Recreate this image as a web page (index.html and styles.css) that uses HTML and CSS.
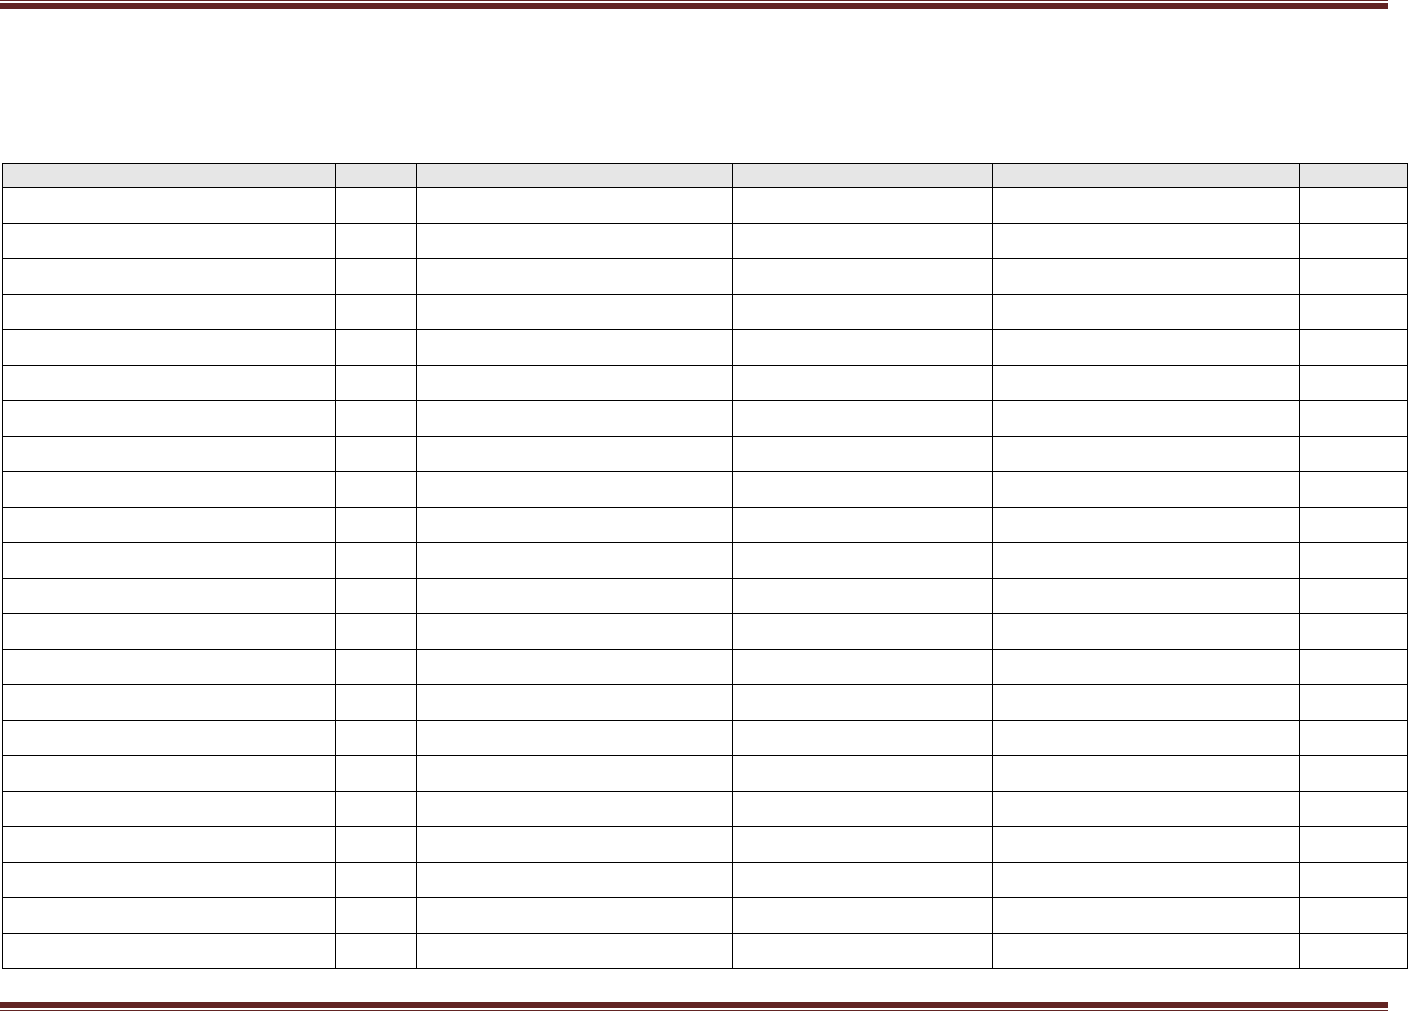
FILE: index.html
```html
<!DOCTYPE html>
<html lang="en">
<head>
<meta charset="utf-8">
<title>Table</title>
<link rel="stylesheet" href="styles.css">
</head>
<body>
<div class="page">
  <header class="rule rule-top">
    <div class="thin"></div>
    <div class="thick"></div>
  </header>
  <main class="content">
    <table class="grid">
      <colgroup>
        <col class="c1"><col class="c2"><col class="c3"><col class="c4"><col class="c5"><col class="c6">
      </colgroup>
      <thead>
        <tr class="head"><th></th><th></th><th></th><th></th><th></th><th></th></tr>
      </thead>
      <tbody>
        <tr><td></td><td></td><td></td><td></td><td></td><td></td></tr>
        <tr><td></td><td></td><td></td><td></td><td></td><td></td></tr>
        <tr><td></td><td></td><td></td><td></td><td></td><td></td></tr>
        <tr><td></td><td></td><td></td><td></td><td></td><td></td></tr>
        <tr><td></td><td></td><td></td><td></td><td></td><td></td></tr>
        <tr><td></td><td></td><td></td><td></td><td></td><td></td></tr>
        <tr><td></td><td></td><td></td><td></td><td></td><td></td></tr>
        <tr><td></td><td></td><td></td><td></td><td></td><td></td></tr>
        <tr><td></td><td></td><td></td><td></td><td></td><td></td></tr>
        <tr><td></td><td></td><td></td><td></td><td></td><td></td></tr>
        <tr><td></td><td></td><td></td><td></td><td></td><td></td></tr>
        <tr><td></td><td></td><td></td><td></td><td></td><td></td></tr>
        <tr><td></td><td></td><td></td><td></td><td></td><td></td></tr>
        <tr><td></td><td></td><td></td><td></td><td></td><td></td></tr>
        <tr><td></td><td></td><td></td><td></td><td></td><td></td></tr>
        <tr><td></td><td></td><td></td><td></td><td></td><td></td></tr>
        <tr><td></td><td></td><td></td><td></td><td></td><td></td></tr>
        <tr><td></td><td></td><td></td><td></td><td></td><td></td></tr>
        <tr><td></td><td></td><td></td><td></td><td></td><td></td></tr>
        <tr><td></td><td></td><td></td><td></td><td></td><td></td></tr>
        <tr><td></td><td></td><td></td><td></td><td></td><td></td></tr>
        <tr><td></td><td></td><td></td><td></td><td></td><td></td></tr>
      </tbody>
    </table>
  </main>
  <footer class="rule rule-bottom">
    <div class="thick"></div>
    <div class="thin"></div>
  </footer>
</div>
</body>
</html>
```
FILE: styles.css
```css
html, body {
  margin: 0;
  padding: 0;
  background: #ffffff;
  font-family: "Liberation Serif", "Times New Roman", serif;
}

.page {
  width: 1408px;
  height: 1012px;
  display: flex;
  flex-direction: column;
}

.rule {
  width: 1388px;
  display: flex;
  flex-direction: column;
  gap: 2px;
}

.rule .thin {
  height: 1px;
  background: #622423;
}

.rule .thick {
  height: 6px;
  background: #622423;
}

.rule-top {
  flex: 0 0 auto;
}

.content {
  padding-top: 154px;
  padding-left: 2px;
  flex: 1 1 auto;
}

.rule-bottom {
  flex: 0 0 auto;
  margin-bottom: 1px;
}

.grid {
  border-collapse: collapse;
  table-layout: fixed;
  width: 1406px;
}

.grid th,
.grid td {
  border: 1px solid #000000;
  padding: 0;
}

.c1 { width: 333px; }
.c2 { width: 81px; }
.c3 { width: 316px; }
.c4 { width: 260px; }
.c5 { width: 307px; }
.c6 { width: 108px; }

.head th {
  background: #e6e6e6;
  height: 23px;
}

.grid tbody tr {
  height: 35.5px;
}
```
